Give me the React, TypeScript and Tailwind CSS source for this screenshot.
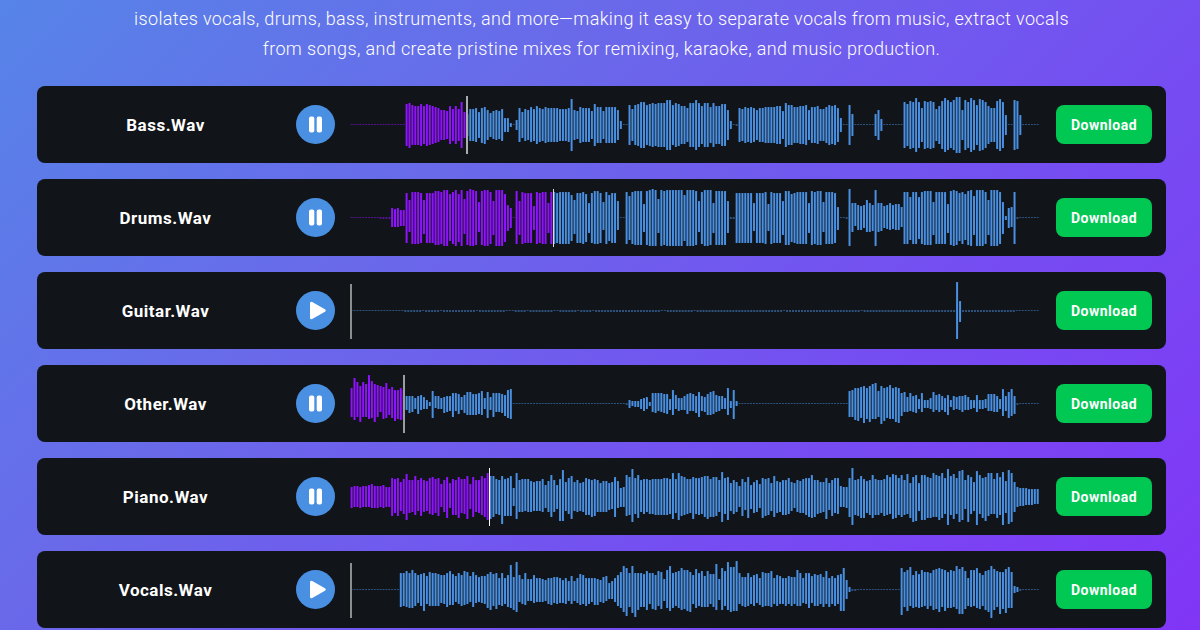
const GROUPS = {
  bass: "0*19 21 22/23 20 19/20*2 21 19 21 20 19 18 17 15*2 14 19 16 19 16 23 13 11 16*2 17 13 17/18 18/19 15 12 14 15 14 16 7*2 2 0 5 17 13 16 15 18/17 16 19 17 16 18 17*4 16*3 17 26 15 14 18 17*3 14 21 18*2 14 18*4 15 4 0*2 20 16 20 21 23*2 20 21 22 21 22*3 25*2 20 22 21 19*2 17 22*2 25 22 19 22*2 18 22 19*2 21*2 15 4 0 1 17 16 18 17 18 17 15 17*2 18*4 19*2 14 22 20*2 18*2 19*2 20 15 18*2 19 16*2 18 20 19 20 17 7 0*2 20 11 0*7 11 15 6 0*7 23 21 24 23 27 23 17 24 23 24 23 16 19 24 27 25 23 25 28*2 15 25 23 27 25 20 26 25 23 19 17*2 24 26 23 10 0*2 25 24 10 0*6",
  drums: "0*10 1*4 10/9 9 10/9 8*2 25 18/14 26*3 25 18/16 25*3 27*2 26 28*2 24/23 26 28 24 28 19/16 27 29/28 28 27 16/14 27 28*2 26 17 28*3 24 13 10 0 27/26 17 26 25*3 12 26 25 26*2 15 26*2 25 26*4 23 18/16 25*2 26 24 15 25 27/26*2 25 16/12 26 23 25*2 17/12 0*2 26 22 26 27*3 14 27 28 29/28 28 19/15 28 27 28*6 23 28*3 27 17/14 26 28*2 28/27 15 27*4 17/15 1*2 25*6 15/13 25*3 26 14/13 26 25*3 17 27*2 24 25 26*4 15 27 26 27*2 16/14 26*3 25 11/12 0*2 1 29/28 15/14 15/8 13/12 12 13/10 18/14 15/14 13 28 15/14 15/13 12/10 13/11 15/12 13/11 14/12*2 11/9 26*2 21/22 26*2 21 26 27*3 16/17 26*4 14/15 27 28 27 25/23 26 24/22 27 28 22/17 28*3 26 18/17 28*3 26 16 2 10 11/9 26 1 0*7",
  guitar: "0*18 1*6 0 1*5 0 1*11 0 1*9 0*3 1*4 0 1*8 0*2 1*6 0 1*4 0 1*22 0*2 1*9 0 1*29 0 1*25 0 1*31 29/28 10/11 1*18 0*8",
  other: "16/13 26/16 22/13 18 22/13 20/13 29/15 23/14 20/18 19/13 18/8 17/15 21/14 15/11 17/14 14/17 14/15 16 14/15 8/6 8/9 8 6/5 8/10 9/6 7/5 4/5 2 13/14 8/4 8/5 6/5 7/9 8 8/7 11/13 11/7 10 7/6 9 12/11*2 10/11*2 11/10 13/11 6/5 12/14 7/6 11/13 11/8*2 10/9 9/12 14 15 0*39 1 4 3/2 3*2 5 6/7 7/5 2 11/8 11/9 11/7 11/8 10/9 10 5/6 14/11 9/5 6/7 6 8/6 10 11/7 10/7 8/9 12/13 8/7 7/8 10/11 12/11 13/10 9/8 8/7 8/5 6/5 16/11 3/4 14/15 3/2 0*38 13 14/13 16 16/17 17/14 18/19 16/15 18 20/15 21/15 13 18/20 16/17 17/14 19/15 16/15 17/18 16/19 11/12 12/8 7/8 11/7 8 9 5 11/8 4*2 6/5 12/8 9/6 10/8 8/6 6/8 9/11 4/3 8/6 7/5 8/6 8 9/6 7/6 4/5 4 9/8 4/5*2 5/4 10/7*2 10/8 8 5 15/12 8/7 12/14 15/12 8/10 1 0*7",
  piano: "10/11 11/10*2 10/11 11/10*2 12/10 13/11 11*2 11/10 12/11 10*2 19 18/16 19 15/14 18/17 23 17/16 17/15 21/18 17/14 19 17/15 16/14 19/17 20/18 18/16 19 13/10 17/15 20/21 14/11 18 17/18 20/21 18/16 18/17 21/22 13/12 20 17/15 17/16 21/18 19/20 24/23 21/22 21/20 18/17 17/18 21/27 18/19 19 21/19 9 24/22 17/15 18/15 18/14 18/15 16/15 15/14 16/14*2 18/15 12/11 16/15 22/20 17/15 12 18/24 27/24 15/14 19/17 21/22 15/14 17/15 14 15 19/18 18 17/20 18/19 17/15 14/15 16/15*2 14/13 15/12 20 16/11 9/10 10 22/19 20/18 28/25 19/17 22/21 17/15 18/17 18/15 17 18/17 18*3 19/18*2 18/17 24/22 18/16 24/23 21/19 20/18 18/17 18/16 20/22 19/17 19/18 20/17 21/20 21/22 18/20 20 20/19 17/15 25 19/17 20/23 14 17 15 11/10 18/19 15/13 20/21 12 15/16 17/15 13/11 19/21 18/19 19/18 14 21/20 16 15 17/18*2 19/17 15/14 14/11 17/15 16 18/16 19/18 19/20 22/21 17/20 17 15/16 15 19/22 14/13 17/19 19/16 19/17 11/10 10 10/11 19/20 29/28 17/18 18/19 21 18/21 16 17/18 22/21 18 17/18 17/16 18/19 22/18 20/17 23/22 22/21 19/18 22/20 17/18 23/17 14/21 20/25 22/24 14 22/23*2 20/21 19/21 24/20 22/20 21/23 24/21 19/17 28 21/18 23/22 19/17 26/25 27/23 17/12 22/25 20/17 15/14 26/28 22/17 19/21 20/24 24/19 24/17 18/17 24/21 20/18 25/28 16 27 24/25 15 10 9*2 9/8 8*2 8/7*2",
  vocals: "0*17 17 17/16 19/17 17/18 20/18 17/16 15/13 16 17/21 14 18/16 17/16*2 16 15/13 15/14 17 19/15 16/15 14/12 17/14 15/16 19/15 18/14 14/12 18/17 15/13 13/12 14/13 14 16/18 18/20 16 17/19 12/15 17/16 12/14 15/17 25/18 13/20 28/22 15/12 11/14 17/15 11*2 15/13 12*2 11/12 10/11 12/14 12/15 13 13/14 12/13 10/13 12/14 9/11 14 9/11 12/13 16/15 15/14 12/16 12/14 12 12/15 11/15 10/12 13 14/11 7/9 9 12 15/16 18 24/22 22/26 17 24/23 17/27 17/20 17 16/17 19/20 17/14 17/19 15/20 19/16 18/19 11 20/18 24/21 17/18 18/16 19/18 22/20 20/19 20/21 18/22 15/14 21/18 17/16 19/17 14/17 19/17 16/14 16/17 26/20 11/10 22/20 19/16 28/20 23/22 23/21 29/21 17/14 13/16 13/17 17/16 13/14 15/16 16/13 12/15 18/17 17/16*2 19/17 12/14 15/16 14 12/14 12/16 14 13/16 13/14 20/16 17/16 12/13 17/14 17/18 14/13 16 15/16 16/14 13/17 19/14 12/17 14 12/16 15/14 16/21 22/21 10/9 3/2 1*2 0*15 22/25 18/17 20/21 23/16 15/18 19/17 16/18 20/17 18/16 18/19 17/16 20 21/19 22 21/17 20/21 18 20/18 19/17 24/19 21/24 23/24 19 12/16 20/17 20/16 22/18 17/19 15/16 19/20 20/22 24/28 21/20 19/17 18/24 18/19 21/23 23/18 18 4/3 3/2 1 0*6",
};

type Bar = { up: number; down: number };

// "u/d*n" is n bars that rise u and fall d around the centre line; "/d" and "*n" are optional.
function parseBars(source: string): Bar[] {
  return source.split(" ").flatMap((token) => {
    const [shape, count] = token.split("*");
    const [up, down] = shape.split("/");
    const bar = { up: Number(up), down: Number(down ?? up) };
    return Array.from({ length: Number(count ?? 1) }, () => bar);
  });
}

type Track = {
  name: string;
  bars: Bar[];
  playing: boolean;
  progress: number;
  cursor: string;
};

const TRACKS: Track[] = [
  { name: "Bass.Wav", bars: parseBars(GROUPS.bass), playing: true, progress: 116, cursor: "#a9aeb0" },
  { name: "Drums.Wav", bars: parseBars(GROUPS.drums), playing: true, progress: 203, cursor: "#dcdcdc" },
  { name: "Guitar.Wav", bars: parseBars(GROUPS.guitar), playing: false, progress: 0, cursor: "#8b8d8e" },
  { name: "Other.Wav", bars: parseBars(GROUPS.other), playing: true, progress: 53, cursor: "#9b9d9e" },
  { name: "Piano.Wav", bars: parseBars(GROUPS.piano), playing: true, progress: 139, cursor: "#ffffff" },
  { name: "Vocals.Wav", bars: parseBars(GROUPS.vocals), playing: false, progress: 0, cursor: "#8b8d8e" },
];

const WIDTH = 689;
const HEIGHT = 58;
const MIDDLE = 29;

function Waveform({ track }: { track: Track }) {
  const pitch = WIDTH / track.bars.length;
  const cursorWidth = track.cursor === "#ffffff" || track.cursor === "#dcdcdc" ? 1 : 2;
  return (
    <svg
      role="img"
      aria-label={`${track.name} waveform`}
      viewBox={`0 0 ${WIDTH} ${HEIGHT}`}
      preserveAspectRatio="none"
      className="block h-[58px] min-w-0 flex-1"
    >
      {track.bars.map((bar, i) => {
        const x = i * pitch + 0.6;
        const silent = bar.up === 0;
        const faint = bar.up === 1;
        return (
          <rect
            key={i}
            x={x}
            y={silent || faint ? MIDDLE - 1 : MIDDLE - bar.up}
            width={2}
            height={silent ? 1 : faint ? 2 : bar.up + bar.down}
            rx={silent || faint ? 0 : 0.5}
            fill={x < track.progress ? "#9013fe" : "#4a90e2"}
            opacity={silent ? 0.5 : faint ? 0.5 : 1}
          />
        );
      })}
      <rect
        x={track.progress}
        y={track.playing ? 0 : 2}
        width={cursorWidth}
        height={track.playing ? HEIGHT : 55}
        fill={track.cursor}
      />
    </svg>
  );
}

function PlayIcon() {
  return (
    <svg viewBox="0 0 39 39" className="size-full" aria-hidden="true">
      <path
        d="M15.5 12.2v14.6L28.2 19.5Z"
        fill="white"
        stroke="white"
        strokeWidth="3"
        strokeLinejoin="round"
      />
    </svg>
  );
}

function PauseIcon() {
  return (
    <svg viewBox="0 0 39 39" className="size-full" aria-hidden="true">
      <rect x="13" y="11.5" width="5.3" height="16" rx="2" fill="white" />
      <rect x="20.7" y="11.5" width="5.3" height="16" rx="2" fill="white" />
    </svg>
  );
}

function TrackRow({ track }: { track: Track }) {
  return (
    <li className="flex h-[77px] items-center rounded-lg bg-[#111418] pr-[14px] pl-2">
      <h3 className="w-[241px] shrink-0 text-center text-[17px] leading-6 font-bold tracking-[0.5px] text-white">
        {track.name}
      </h3>
      <button
        type="button"
        aria-label={`${track.playing ? "Pause" : "Play"} ${track.name}`}
        className="ml-[10px] size-[39px] shrink-0 rounded-full bg-[#4a90e2]"
      >
        {track.playing ? <PauseIcon /> : <PlayIcon />}
      </button>
      <div className="flex min-w-0 flex-1 pr-[17px] pl-[15px]">
        <Waveform track={track} />
      </div>
      <button
        type="button"
        className="h-[39px] w-24 shrink-0 rounded-lg bg-[#00c853] text-[14px] leading-5 font-bold tracking-[0.5px] text-white"
      >
        Download
      </button>
    </li>
  );
}

export default function App() {
  return (
    <main className="min-h-screen overflow-hidden bg-[linear-gradient(135deg,#5684e8_0%,#6a68ea_35%,#7450f1_64%,#8135f6_100%)] pr-[34px] pl-[37px] font-['Roboto',sans-serif]">
      <p className="mx-auto max-w-[960px] pt-1 pb-[22px] text-center text-[18px] leading-[30px] font-light tracking-[0.02em] text-white">
        isolates vocals, drums, bass, instruments, and more—making it easy to separate vocals from
        music, extract vocals from songs, and create pristine mixes for remixing, karaoke, and music
        production.
      </p>
      <ul className="flex flex-col gap-4">
        {TRACKS.map((track) => (
          <TrackRow key={track.name} track={track} />
        ))}
      </ul>
    </main>
  );
}
